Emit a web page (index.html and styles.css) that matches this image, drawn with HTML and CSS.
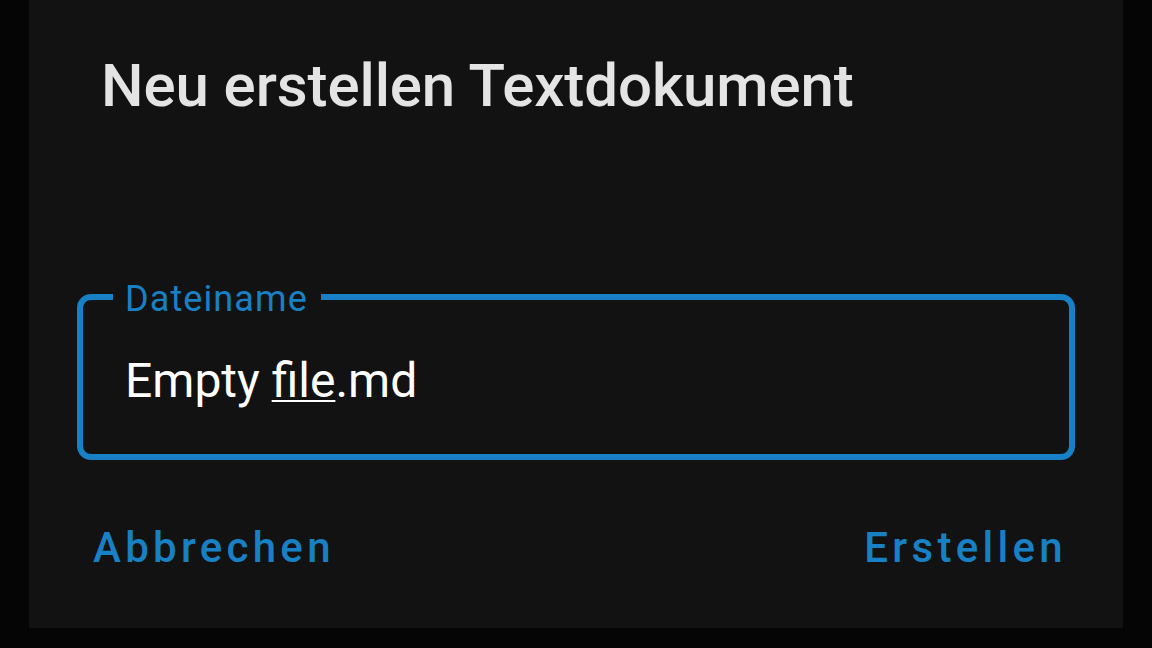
FILE: index.html
```html
<!DOCTYPE html>
<html lang="de">
<head>
<meta charset="utf-8">
<title>Neu erstellen Textdokument</title>
<link rel="stylesheet" href="styles.css">
</head>
<body>
<div class="screen">
  <div class="dialog">
    <h1 class="title">Neu erstellen Textdokument</h1>
    <div class="field">
      <span class="label">Dateiname</span>
      <div class="value">Empty <span class="spell">file</span>.md</div>
    </div>
    <div class="actions">
      <button class="btn">Abbrechen</button>
      <button class="btn">Erstellen</button>
    </div>
  </div>
</div>
</body>
</html>
```

FILE: styles.css
```css
html, body {
  margin: 0;
  padding: 0;
  background: #050505;
  font-family: Roboto, "Noto Sans", sans-serif;
}
.screen {
  width: 1152px;
  height: 648px;
  display: flex;
  padding-left: 29px;
  box-sizing: border-box;
}
.dialog {
  width: 1094px;
  height: 628px;
  background: #121212;
  box-sizing: border-box;
  display: flex;
  flex-direction: column;
}
.title {
  margin: 50px 0 0 72px;
  font-size: 60px;
  line-height: 72px;
  font-weight: 500;
  letter-spacing: -0.1px;
  color: #e4e4e4;
}
.field {
  position: relative;
  margin: 172px 48px 0 48px;
  height: 166px;
  box-sizing: border-box;
  border: 6px solid #1880c4;
  border-radius: 14px;
  padding: 53px 43px 0 42px;
}
.label {
  position: absolute;
  left: 30px;
  top: -19px;
  padding: 0 13px 0 12px;
  background: #121212;
  color: #1880c4;
  font-size: 36px;
  line-height: 36px;
  letter-spacing: 1.1px;
}
.value {
  font-size: 48px;
  line-height: 56px;
  color: #ffffff;
}
.spell {
  text-decoration: underline;
  text-decoration-thickness: 2px;
  text-underline-offset: 3px;
}
.actions {
  display: flex;
  justify-content: space-between;
  margin: 63px 56px 0 64px;
}
.btn {
  background: none;
  border: none;
  padding: 0;
  font-family: Roboto, "Noto Sans", sans-serif;
  font-size: 42px;
  line-height: 50px;
  font-weight: 500;
  letter-spacing: 4.3px;
  color: #1880c4;
}
```
